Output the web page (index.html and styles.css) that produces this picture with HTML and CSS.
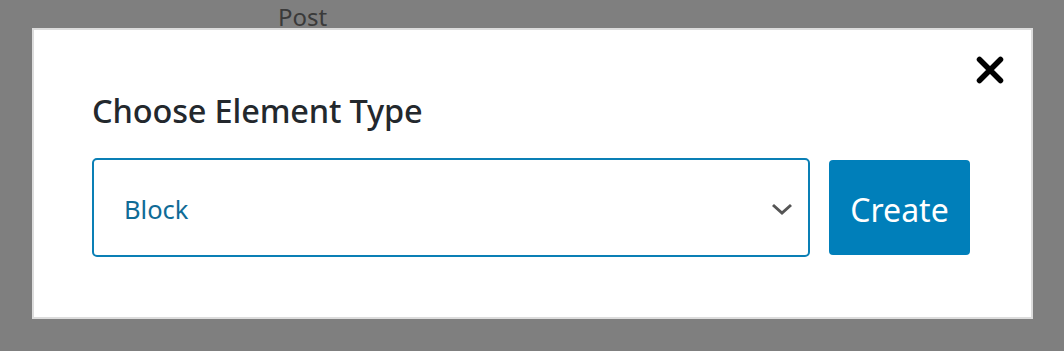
FILE: index.html
```html
<!DOCTYPE html>
<html>
<head>
<meta charset="utf-8">
<link rel="stylesheet" href="styles.css">
</head>
<body>
<div class="page">
  <div class="behind">Post</div>
  <div class="overlay">
    <div class="modal">
      <button class="close" aria-label="Close">
        <svg width="30" height="30" viewBox="0 0 30 30"><path d="M4.5 4.5 L25.5 25.5 M25.5 4.5 L4.5 25.5" stroke="#000" stroke-width="5.5" stroke-linecap="round"/></svg>
      </button>
      <h2 class="title">Choose Element Type</h2>
      <div class="row">
        <div class="select">
          <span class="value">Block</span>
          <svg class="chev" width="22" height="14" viewBox="0 0 22 14"><path d="M2 3 L11 11 L20 3" fill="none" stroke="#555" stroke-width="3"/></svg>
        </div>
        <button class="create">Create</button>
      </div>
    </div>
  </div>
</div>
</body>
</html>
```
FILE: styles.css
```css
html, body {
  margin: 0;
  padding: 0;
}
body {
  width: 1064px;
  height: 351px;
  overflow: hidden;
  background: #7f7f7f;
  font-family: "Noto Sans", "Open Sans", sans-serif;
}
.page {
  position: relative;
  width: 1064px;
  height: 351px;
}
.behind {
  position: absolute;
  left: 278px;
  top: 0px;
  font-size: 24px;
  line-height: 34px;
  color: #3a3a3a;
}
.overlay {
  position: absolute;
  inset: 0;
  padding: 28px 0 0 32px;
}
.modal {
  position: relative;
  box-sizing: border-box;
  width: 1001px;
  height: 291px;
  background: #fff;
  border: 2px solid #dcdcdc;
  padding: 61px 0 0 58px;
}
.close {
  position: absolute;
  right: 26px;
  top: 25px;
  padding: 0;
  border: 0;
  background: none;
  width: 30px;
  height: 30px;
}
.title {
  margin: 0;
  font-size: 32.5px;
  font-weight: 500;
  color: #23282d;
  line-height: 40px;
  letter-spacing: -0.15px;
}
.row {
  display: flex;
  align-items: center;
  gap: 19px;
  margin-top: 27px;
}
.select {
  box-sizing: border-box;
  width: 718px;
  height: 99px;
  border: 2px solid #0a7fb5;
  border-radius: 5px;
  display: flex;
  align-items: center;
  justify-content: space-between;
  padding: 2px 15px 0 30px;
}
.value {
  font-size: 25.5px;
  color: #0f6b96;
}
.chev {
  display: block;
}
.create {
  width: 141px;
  height: 95px;
  border: 0;
  border-radius: 4px;
  background: #007fba;
  color: #fff;
  font-family: "Noto Sans", "Open Sans", sans-serif;
  font-size: 32px;
  padding: 3px 0 0;
}
```
